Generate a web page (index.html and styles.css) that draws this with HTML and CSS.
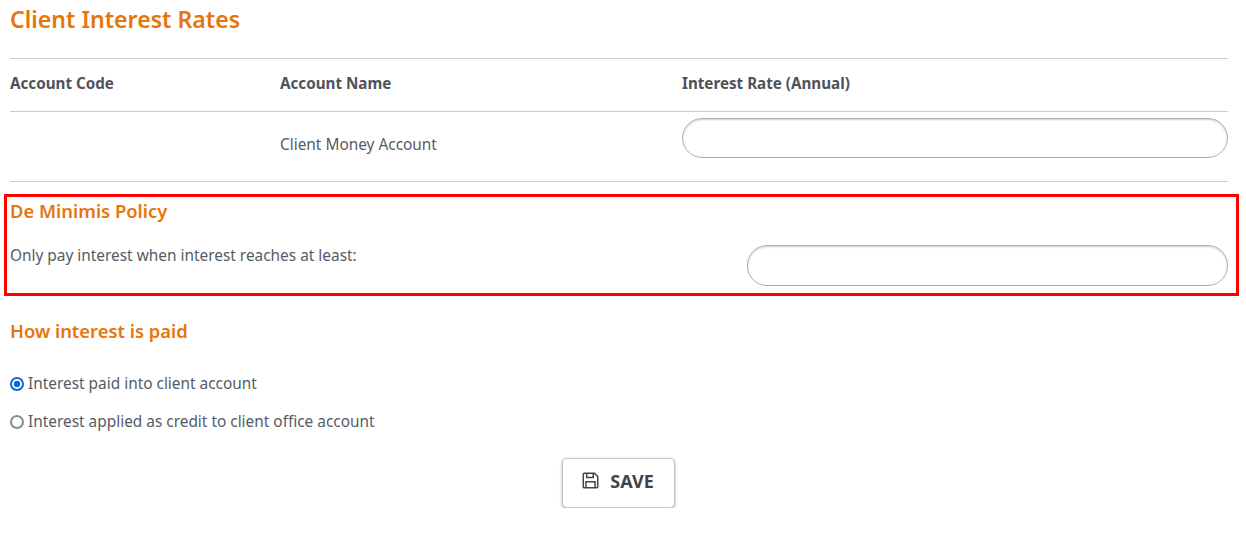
FILE: index.html
```html
<!DOCTYPE html>
<html lang="en">

<head>
	<meta charset="UTF-8">
	<meta name="viewport" content="width=device-width, initial-scale=1.0">
	<title>Client Interest Rates</title>
	<link rel="stylesheet" href="styles.css">
</head>

<body>
	<h1 class="page-title">Client Interest Rates</h1>

	<div class="rates-row rates-head">
		<span>Account Code</span>
		<span>Account Name</span>
		<span>Interest Rate (Annual)</span>
	</div>
	<div class="rates-row rates-body">
		<span></span>
		<span>Client Money Account</span>
		<input class="text-input" type="text">
	</div>

	<div class="policy-box">
		<h2 class="section-title">De Minimis Policy</h2>
		<div class="policy-row">
			<span class="policy-label">Only pay interest when interest reaches at least:</span>
			<input class="text-input policy-input" type="text">
		</div>
	</div>

	<h2 class="section-title paid-title">How interest is paid</h2>
	<label class="radio-row">
		<input type="radio" name="paid" checked>
		<span>Interest paid into client account</span>
	</label>
	<label class="radio-row">
		<input type="radio" name="paid">
		<span>Interest applied as credit to client office account</span>
	</label>

	<div class="actions">
		<button class="save-btn" type="button">
			<svg width="17" height="17" viewBox="0 0 16 16" fill="none" stroke="#3f4548" stroke-width="1.4">
				<path d="M1.2 2.2a1 1 0 0 1 1-1h9.6l3 3v9.6a1 1 0 0 1-1 1H2.2a1 1 0 0 1-1-1z" />
				<path d="M4.4 1.2v4h6.2v-4" />
				<path d="M3.7 14.8V9.2h8.6v5.6" />
			</svg>
			SAVE
		</button>
	</div>
</body>

</html>
```

FILE: styles.css
```css
* {
	box-sizing: border-box;
	font-family: "Noto Sans", sans-serif;
}

body {
	margin: 0;
	padding: 0 18px 0 10px;
	background: #fff;
	color: #555b66;
	font-size: 15.4px;
}

.page-title {
	margin: 0;
	height: 58px;
	padding-top: 3px;
	font-size: 23.1px;
	line-height: 32px;
	font-weight: 600;
	color: #e8750a;
}

.section-title {
	margin: 0;
	font-size: 18.4px;
	line-height: 24px;
	font-weight: 600;
	color: #e8750a;
}

.rates-row {
	display: grid;
	grid-template-columns: 270px 402px 1fr;
	align-items: center;
	border-top: 1px solid #ccc;
}

.rates-head {
	height: 53px;
	padding-bottom: 4px;
	font-size: 15.2px;
	font-weight: 700;
	color: #50525a;
}

.rates-body {
	height: 71px;
	padding-bottom: 4px;
	border-bottom: 1px solid #ccc;
}

.rates-body .text-input {
	align-self: start;
	margin-top: 6px;
}

.text-input {
	display: block;
	width: 100%;
	height: 40px;
	border: 1px solid #b0b0b0;
	border-radius: 20px;
	background: #fff;
	box-shadow: inset 0 1px 2px rgba(0, 0, 0, 0.2);
	outline: none;
}

.policy-box {
	margin: 12px -11px 0 -6px;
	height: 102px;
	padding: 2px 8px 0 3px;
	border: 3px solid #f00;
}

.policy-row {
	display: flex;
	justify-content: space-between;
	align-items: flex-start;
	margin-top: 21px;
	line-height: 24px;
}

.policy-input {
	width: 481px;
	height: 41px;
	margin-top: 1px;
}

.paid-title {
	margin: 23px 0 28px;
}

.radio-row {
	display: flex;
	align-items: center;
	gap: 4px;
	height: 24px;
	margin-bottom: 14px;
}

.radio-row input {
	appearance: none;
	width: 14px;
	height: 14px;
	margin: 1px 0 0;
	border: 2px solid #8a8a94;
	border-radius: 50%;
	background: #fff;
}

.radio-row input:checked {
	border-color: #1266d4;
	background: radial-gradient(circle, #1266d4 0 3px, #fff 3.6px);
}

.actions {
	display: flex;
	justify-content: center;
	margin-top: 25px;
	padding-right: 2px;
}

.save-btn {
	display: flex;
	align-items: center;
	justify-content: center;
	gap: 11px;
	width: 113px;
	height: 50px;
	padding: 0 0 5px;
	background: #fff;
	border: 1px solid #c8c8c8;
	border-radius: 5px;
	box-shadow: 0 1px 3px rgba(0, 0, 0, 0.35);
	color: #3f4548;
	font-size: 18px;
	font-weight: 700;
}
```
